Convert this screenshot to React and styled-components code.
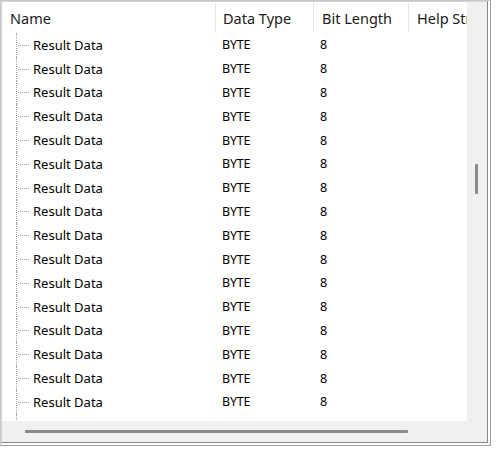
import React from 'react';
import styled, { createGlobalStyle } from 'styled-components';

const GlobalStyle = createGlobalStyle`
  html, body {
    margin: 0;
    padding: 0;
    background: #ffffff;
  }
  body {
    font-family: "Noto Sans", "Open Sans", sans-serif;
    color: #000;
  }
`

const Frame = styled.div`
  width: 491px;
  height: 446px;
  box-sizing: border-box;
  border: 1px solid #a0a0a0;
  border-top-color: #c8c8c8;
  border-left-color: #c8c8c8;
  padding: 0 2px 2px 0;
  background: #fff;
`

const ListView = styled.div`
  width: 100%;
  height: 100%;
  box-sizing: border-box;
  border: 1px solid #828790;
  border-top-color: #d4d4d4;
  border-left-color: #d4d4d4;
  display: grid;
  grid-template-columns: 1fr 20px;
  grid-template-rows: 1fr 21px;
  background: #f0f0f0;
`

const Content = styled.div`
  background: #fff;
  overflow: hidden;
  padding: 1px 0 0 1px;
`

const Cols = '213px 98px 95px 120px';

const Header = styled.div`
  display: grid;
  grid-template-columns: ${Cols};
  height: 30px;
`

const HeadCell = styled.div`
  display: flex;
  align-items: center;
  padding-left: ${p => p.$pad || 7}px;
  font-size: 14.5px;
  color: #1a1a1a;
  white-space: nowrap;
  overflow: hidden;
  border-right: 1px solid #e5e5e5;
  padding-bottom: 1px;
`

const Row = styled.div`
  display: grid;
  grid-template-columns: ${Cols};
  height: 23.8px;
  font-size: 13px;
`

const TreeCell = styled.div`
  position: relative;
  display: flex;
  align-items: center;
  padding-left: 30px;
  white-space: nowrap;
  &::before {
    content: '';
    position: absolute;
    left: 13px;
    top: 0;
    bottom: 0;
    border-left: 1px dotted #a0a0a0;
  }
  &::after {
    content: '';
    position: absolute;
    left: 15px;
    width: 11px;
    top: 50%;
    border-top: 1px dotted #a0a0a0;
  }
`

const Cell = styled.div`
  display: flex;
  align-items: center;
  padding-left: ${p => p.$pad || 6}px;
  font-size: 12.5px;
  letter-spacing: -0.2px;
  white-space: nowrap;
`

const VScroll = styled.div`
  background: #f0f0f0;
  position: relative;
`

const VThumb = styled.div`
  position: absolute;
  left: 8px;
  top: 162px;
  width: 3px;
  height: 30px;
  background: #8a8a8a;
  border-radius: 1px;
`

const HScroll = styled.div`
  background: #f0f0f0;
  position: relative;
`

const HThumb = styled.div`
  position: absolute;
  left: 23px;
  top: 9px;
  width: 383px;
  height: 3px;
  background: #8a8a8a;
  border-radius: 1px;
`

const Corner = styled.div`
  background: #f0f0f0;
`

const rows = Array.from({ length: 17 }, () => ({ name: 'Result Data', type: 'BYTE', bits: '8' }));

export default function App() {
  return (
    <>
      <GlobalStyle />
      <Frame>
        <ListView>
          <Content>
            <Header>
              <HeadCell $pad={7}>Name</HeadCell>
              <HeadCell $pad={7}>Data Type</HeadCell>
              <HeadCell $pad={8}>Bit Length</HeadCell>
              <HeadCell $pad={8}>Help String</HeadCell>
            </Header>
            {rows.map((r, i) => (
              <Row key={i}>
                <TreeCell>{r.name}</TreeCell>
                <Cell $pad={6}>{r.type}</Cell>
                <Cell $pad={6}>{r.bits}</Cell>
                <Cell />
              </Row>
            ))}
          </Content>
          <VScroll>
            <VThumb />
          </VScroll>
          <HScroll>
            <HThumb />
          </HScroll>
          <Corner />
        </ListView>
      </Frame>
    </>
  );
}
